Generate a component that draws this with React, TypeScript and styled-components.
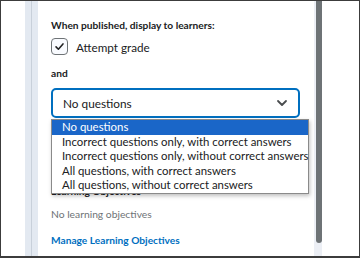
import React from "react";
import styled, { createGlobalStyle } from "styled-components";

const Global = createGlobalStyle`
  html, body { margin: 0; padding: 0; background: #fff; }
  body { font-family: Lato, "Noto Sans", sans-serif; }
  * { box-sizing: border-box; }
`;

const Frame = styled.div`
  width: 360px;
  height: 258px;
  border: 1px solid #3c3c3c;
  border-bottom-width: 2px;
  display: flex;
  overflow: hidden;
  background: #fff;
`;

const Gutter = styled.div`
  width: 24px;
  flex: none;
`;

const SideStrip = styled.div`
  width: 13px;
  flex: none;
  background: #e3e9f1;
  display: flex;
  justify-content: center;
  &::after {
    content: "";
    width: 1px;
    background: #c8d0da;
  }
`;

const Content = styled.div`
  width: 276px;
  flex: none;
  position: relative;
  padding: 17px 0 0 13px;
  display: flex;
  flex-direction: column;
`;

const Scroll = styled.div`
  width: 8px;
  flex: none;
  background: #eceff5;
  display: flex;
  justify-content: flex-end;
`;

const Thumb = styled.div`
  width: 6px;
  height: 242px;
  background: #6e7376;
  border-radius: 0 0 3px 3px;
`;

const Label = styled.div<{ $gap?: number }>`
  font-size: 10.2px;
  font-weight: 700;
  color: #202122;
  line-height: 14px;
  margin-top: ${(p) => p.$gap ?? 0}px;
`;

const CheckRow = styled.label`
  display: flex;
  align-items: center;
  gap: 8px;
  margin-top: 6px;
  font-size: 11.7px;
  color: #202122;
`;

const Box = styled.span`
  width: 17px;
  height: 17px;
  border: 1px solid #6e7376;
  border-radius: 4px;
  display: flex;
  align-items: center;
  justify-content: center;
  background: #f9fbff;
`;

const Select = styled.div`
  width: 249px;
  height: 30px;
  border: 2px solid #006fbf;
  border-radius: 5px;
  margin-top: 8px;
  display: flex;
  align-items: center;
  justify-content: space-between;
  padding: 0 10px 0 10px;
  font-size: 11.8px;
  color: #202122;
`;

const Menu = styled.ul`
  position: absolute;
  left: 13px;
  top: 118px;
  width: 258px;
  margin: 0;
  padding: 0;
  list-style: none;
  background: #fff;
  border: 1px solid #8a8a8a;
  box-shadow: 1px 2px 4px rgba(0, 0, 0, 0.25);
  z-index: 2;
`;

const Option = styled.li<{ $active?: boolean }>`
  font-size: 11.4px;
  line-height: 14.6px;
  padding: 0 0 0 10px;
  white-space: nowrap;
  color: ${(p) => (p.$active ? "#fff" : "#202122")};
  background: ${(p) => (p.$active ? "#1a66c8" : "transparent")};
`;

const Muted = styled.div`
  font-size: 10.3px;
  color: #6e7376;
  margin-top: 10px;
`;

const Link = styled.div`
  font-size: 10.2px;
  font-weight: 700;
  color: #006fbf;
  margin-top: 14px;
`;

const options = [
  "No questions",
  "Incorrect questions only, with correct answers",
  "Incorrect questions only, without correct answers",
  "All questions, with correct answers",
  "All questions, without correct answers",
];

export default function App() {
  return (
    <>
      <Global />
      <Frame>
        <Gutter />
        <SideStrip />
        <Content>
          <Label>When published, display to learners:</Label>
          <CheckRow>
            <Box>
              <svg width="11" height="11" viewBox="0 0 12 12">
                <path d="M2.2 6.4 L4.8 9 L9.8 3.2" fill="none" stroke="#202122" strokeWidth="1.7" strokeLinecap="round" strokeLinejoin="round" />
              </svg>
            </Box>
            Attempt grade
          </CheckRow>
          <Label $gap={11}>and</Label>
          <Select>
            <span>No questions</span>
            <svg width="12" height="8" viewBox="0 0 12 8">
              <path d="M2 2 L6 6 L10 2" fill="none" stroke="#494c4e" strokeWidth="1.8" strokeLinecap="round" strokeLinejoin="round" />
            </svg>
          </Select>
          <Menu>
            {options.map((o, i) => (
              <Option key={o} $active={i === 0}>{o}</Option>
            ))}
          </Menu>
          <Label $gap={66}>Learning Objectives</Label>
          <Muted>No learning objectives</Muted>
          <Link>Manage Learning Objectives</Link>
        </Content>
        <Scroll>
          <Thumb />
        </Scroll>
      </Frame>
    </>
  );
}
